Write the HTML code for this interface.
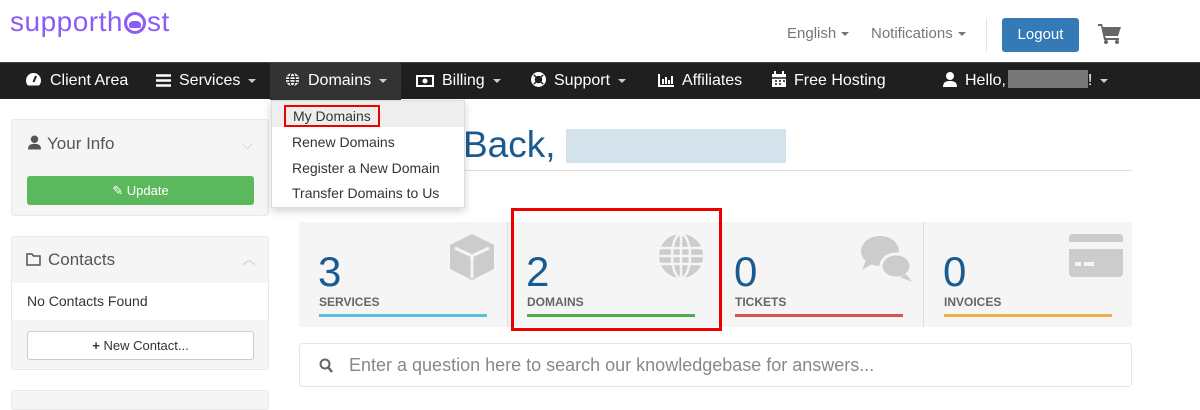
<!DOCTYPE html><html><head><style>
*{box-sizing:border-box;margin:0;padding:0}
body{width:1200px;height:401px;overflow:hidden;background:#fff;font-family:"Liberation Sans",sans-serif;position:relative;color:#333}
.a{position:absolute}
.nav{left:0;top:62px;width:1200px;height:37px;background:#1f1f1f;border-top:1px solid #444}
.ni{position:absolute;top:0;height:37px;line-height:36px;color:#fff;font-size:16px;white-space:nowrap}
.ni svg{vertical-align:-2px;margin-right:8px}
.car{display:inline-block;border-left:4px solid transparent;border-right:4px solid transparent;border-top:4px solid #ccc;vertical-align:middle;margin-left:8px}
.panel{background:#f5f5f5;border:1px solid #e8e8e8;border-radius:3px}
.stat{top:222px;width:208px;height:105px}
.num{position:absolute;left:19px;top:26px;font-size:42px;color:#1a5a8e}
.lab{position:absolute;left:20px;top:73px;font-size:12px;font-weight:bold;color:#666}
.bar{position:absolute;left:20px;right:20px;top:92px;height:3px}
</style></head><body>
<div class="a" style="left:10px;top:6px;font-size:28px;color:#8b5cf6;letter-spacing:0.5px">supporth<span style="display:inline-block;width:22px;height:22px;border:3px solid #8b5cf6;border-radius:50%;vertical-align:-3px;position:relative;margin:0 1px"><span style="position:absolute;left:2px;top:6px;width:12px;height:7px;background:#8b5cf6;border-radius:4px 4px 2px 2px"></span></span>st</div>
<div class="a" style="left:787px;top:25px;font-size:15px;color:#777">English<span class="car" style="border-top-color:#777;margin-left:5px"></span></div>
<div class="a" style="left:871px;top:25px;font-size:15px;color:#777">Notifications<span class="car" style="border-top-color:#777;margin-left:5px"></span></div>
<div class="a" style="left:986px;top:18px;width:1px;height:34px;background:#e5e5e5"></div>
<div class="a" style="left:1002px;top:18px;width:77px;height:34px;background:#337ab7;border-radius:3px;color:#fff;font-size:15px;text-align:center;line-height:34px">Logout</div>
<svg class="a" style="left:1098px;top:23px" width="24" height="22" viewBox="0 0 24 22"><path d="M0 1h4l1 3h18l-3 9H7l1 2h13v2H6L3 3H0z" fill="#666"/><circle cx="8" cy="19" r="2" fill="#666"/><circle cx="19" cy="19" r="2" fill="#666"/></svg>
<div class="a nav">
<div class="a" style="left:270px;top:0;width:131px;height:37px;background:#333"></div>
<div class="ni" style="left:25px"><svg width="17" height="15" viewBox="0 0 17 15"><path d="M8.5 1A7.5 7.5 0 0 0 1 8.5c0 2 .8 3.8 2 5h11a7.5 7.5 0 0 0 2-5A7.5 7.5 0 0 0 8.5 1z" fill="#fff"/><path d="M8.5 10L11 4" stroke="#1f1f1f" stroke-width="2"/></svg>Client Area</div>
<div class="ni" style="left:156px"><svg width="15" height="13" viewBox="0 0 15 13"><path d="M0 1.5h15M0 6.5h15M0 11.5h15" stroke="#fff" stroke-width="2.6"/></svg>Services<span class="car"></span></div>
<div class="ni" style="left:285px"><svg width="15" height="15" viewBox="0 0 16 16"><circle cx="8" cy="8" r="7" fill="#fff"/><g stroke="#1f1f1f" stroke-width="1.2" fill="none"><ellipse cx="8" cy="8" rx="3" ry="7"/><path d="M1 8h14M2 5h12M2 11h12"/></g></svg>Domains<span class="car"></span></div>
<div class="ni" style="left:416px"><svg width="18" height="12" viewBox="0 0 18 12"><rect x="1" y="1" width="16" height="10" fill="none" stroke="#fff" stroke-width="2"/><circle cx="9" cy="6" r="2.5" fill="#fff"/></svg>Billing<span class="car"></span></div>
<div class="ni" style="left:531px"><svg width="15" height="15" viewBox="0 0 16 16"><circle cx="8" cy="8" r="6" fill="none" stroke="#fff" stroke-width="4"/><path d="M3 3l3 3M13 3l-3 3M3 13l3-3M13 13l-3-3" stroke="#1f1f1f" stroke-width="1.5"/></svg>Support<span class="car"></span></div>
<div class="ni" style="left:658px"><svg width="16" height="13" viewBox="0 0 16 13"><path d="M1 0v12h15" stroke="#fff" stroke-width="2" fill="none"/><path d="M5 10V5M8 10V3M11 10V6M14 10V2" stroke="#fff" stroke-width="2"/></svg>Affiliates</div>
<div class="ni" style="left:772px"><svg width="14" height="16" viewBox="0 0 14 16"><rect x="0" y="3" width="14" height="13" fill="#fff"/><path d="M3 0v4M11 0v4" stroke="#fff" stroke-width="2"/><path d="M0 7h14M3 10h2M7 10h2M3 13h2M7 13h2M11 10h2" stroke="#1f1f1f" stroke-width="1.5"/></svg>Free Hosting</div>
<div class="ni" style="left:943px"><svg width="14" height="15" viewBox="0 0 14 15"><circle cx="7" cy="4" r="4" fill="#fff"/><path d="M0 15c0-5 3-6 7-6s7 1 7 6z" fill="#fff"/></svg>Hello,<span style="display:inline-block;width:80px;height:18px;background:#777;vertical-align:-3px;margin-left:2px"></span>!<span class="car"></span></div>
</div>
<div class="a panel" style="left:11px;top:119px;width:258px;height:97px">
<div class="a" style="left:16px;top:14px;font-size:17px;color:#555"><svg width="13" height="15" viewBox="0 0 14 15" style="vertical-align:-1px;margin-right:6px"><circle cx="7" cy="4" r="4" fill="#555"/><path d="M0 15c0-5 3-6 7-6s7 1 7 6z" fill="#555"/></svg>Your Info</div>
<div class="a" style="left:230px;top:16px;color:#ccc;font-size:14px">⌵</div>
<div class="a" style="left:15px;top:56px;width:227px;height:29px;background:#5cb85c;border-radius:3px;color:#fff;font-size:13px;text-align:center;line-height:29px">✎ Update</div>
</div>
<div class="a panel" style="left:11px;top:236px;width:258px;height:134px">
<div class="a" style="left:14px;top:13px;font-size:17px;color:#555"><svg width="15" height="13" viewBox="0 0 15 13" style="vertical-align:-1px;margin-right:7px"><path d="M1 1h5l1.5 2H14v9H1z" fill="none" stroke="#555" stroke-width="1.5"/></svg>Contacts</div>
<div class="a" style="left:230px;top:12px;color:#ccc;font-size:14px">︿</div>
<div class="a" style="left:0;top:46px;width:256px;height:37px;background:#fff;padding:10px 15px;font-size:14px">No Contacts Found</div>
<div class="a" style="left:15px;top:94px;width:227px;height:29px;background:#fff;border:1px solid #ccc;border-radius:3px;font-size:13px;text-align:center;line-height:27px"><b>+</b> New Contact...</div>
</div>
<div class="a panel" style="left:11px;top:390px;width:258px;height:20px"></div>
<div class="a" style="left:463px;top:124px;font-size:37px;color:#1a5a8e">Back,<span style="display:inline-block;width:220px;height:34px;background:#d4e2ec;vertical-align:-6px;margin-left:10px"></span></div>
<div class="a" style="left:300px;top:170px;width:832px;height:1px;background:#ddd"></div>
<div class="a" style="left:271px;top:100px;width:194px;height:108px;background:#fff;border:1px solid #ddd;box-shadow:0 3px 8px rgba(0,0,0,.18);font-size:14px">
<div style="height:26px;background:#eee"></div>
<div class="a" style="left:12px;top:4px;padding:1px 7px;border:2px solid #e00">My Domains</div>
<div class="a" style="left:20px;top:33px">Renew Domains</div>
<div class="a" style="left:20px;top:59px">Register a New Domain</div>
<div class="a" style="left:20px;top:84px">Transfer Domains to Us</div>
</div>
<div class="a" style="left:299px;top:222px;width:833px;height:105px;background:#f5f5f5"></div>
<div class="a stat" style="left:299px"><div class="num">3</div><div class="lab">SERVICES</div><div class="bar" style="background:#5bc0de"></div>
<svg class="a" style="left:148px;top:10px" width="50" height="50" viewBox="0 0 50 50"><path d="M25 2l22 11v24L25 48 3 37V13z" fill="#ccc"/><path d="M8 16l17 8 17-8M25 24v22" stroke="#f5f5f5" stroke-width="3" fill="none"/></svg></div>
<div class="a" style="left:507px;top:222px;width:1px;height:105px;background:#ddd"></div>
<div class="a stat" style="left:507px"><div class="num">2</div><div class="lab">DOMAINS</div><div class="bar" style="background:#4cae4c"></div>
<svg class="a" style="left:150px;top:10px" width="48" height="48" viewBox="0 0 48 48"><circle cx="24" cy="24" r="22" fill="#ccc"/><g stroke="#f5f5f5" stroke-width="2.5" fill="none"><ellipse cx="24" cy="24" rx="9" ry="22"/><path d="M24 2v44M3 16h42M3 32h42M2 24h44"/></g></svg></div>
<div class="a" style="left:923px;top:222px;width:1px;height:105px;background:#ddd"></div>
<div class="a stat" style="left:715px"><div class="num">0</div><div class="lab">TICKETS</div><div class="bar" style="background:#d9534f"></div>
<svg class="a" style="left:143px;top:12px" width="58" height="50" viewBox="0 0 58 50"><ellipse cx="22" cy="17" rx="19" ry="15" fill="#ccc"/><path d="M8 26l-4 10 12-7z" fill="#ccc"/><ellipse cx="38" cy="32" rx="15" ry="12" stroke="#f5f5f5" stroke-width="3" fill="#ccc"/><path d="M48 40l6 8-12-5z" fill="#ccc"/></svg></div>
<div class="a stat" style="left:924px"><div class="num">0</div><div class="lab">INVOICES</div><div class="bar" style="background:#f0ad4e"></div>
<svg class="a" style="left:145px;top:12px" width="54" height="43" viewBox="0 0 54 43"><rect x="0" y="0" width="54" height="43" rx="4" fill="#ccc"/><rect x="0" y="8" width="54" height="7" fill="#f5f5f5"/><rect x="6" y="28" width="6" height="4" fill="#f5f5f5"/><rect x="15" y="28" width="10" height="4" fill="#f5f5f5"/></svg></div>
<div class="a" style="left:511px;top:208px;width:211px;height:123px;border:3px solid #e00"></div>
<div class="a" style="left:299px;top:343px;width:833px;height:44px;border:1px solid #e5e5e5;border-radius:4px;background:#fff">
<svg class="a" style="left:19px;top:14px" width="14" height="15" viewBox="0 0 14 15"><circle cx="6" cy="6" r="4.5" stroke="#666" stroke-width="2" fill="none"/><path d="M9 9l4 5" stroke="#666" stroke-width="2.5"/></svg>
<div class="a" style="left:49px;top:11px;font-size:18px;color:#888">Enter a question here to search our knowledgebase for answers...</div>
</div>
</body></html>
